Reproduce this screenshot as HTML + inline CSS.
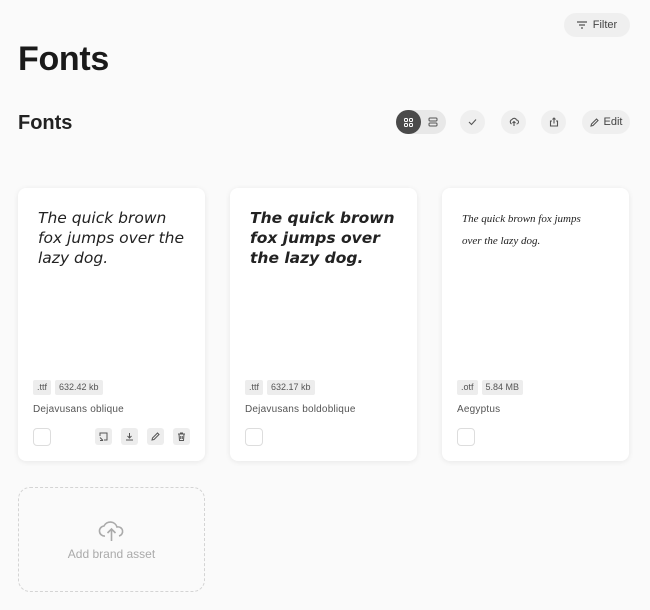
<!DOCTYPE html>
<html><head><meta charset="utf-8"><style>
*{box-sizing:border-box;margin:0;padding:0}
body{width:650px;height:610px;background:#fafafa;font-family:"Liberation Sans",sans-serif;position:relative;overflow:hidden;color:#222}
.abs{position:absolute}
.pill{position:absolute;background:#efefef;border-radius:12px;display:flex;align-items:center;justify-content:center;font-size:11px;color:#444}
h1{position:absolute;left:18px;top:40px;font-size:34px;font-weight:700;letter-spacing:-0.3px;color:#1a1a1a}
h2{position:absolute;left:18px;top:112px;font-size:20px;font-weight:700;color:#222}
.card{position:absolute;top:188px;width:187px;height:273px;background:#fff;border-radius:8px;box-shadow:0 1px 6px rgba(0,0,0,0.08)}
.sample{position:absolute;left:20px;top:20px;width:155px;font-size:15.5px;line-height:20px;color:#222}
.tags{position:absolute;left:15px;top:192px;display:flex;gap:4px}
.tag{background:#ededed;border-radius:2px;font-size:9px;color:#555;padding:2px 4px;height:15px;line-height:11px}
.name{position:absolute;left:15px;top:216px;font-size:10px;color:#555;letter-spacing:0.2px}
.chk{position:absolute;left:15px;top:240px;width:18px;height:18px;border:1px solid #ddd;border-radius:4px;background:#fff}
.ib{position:absolute;top:240px;width:17px;height:17px;background:#ededed;border-radius:3px;display:flex;align-items:center;justify-content:center}
</style></head><body>
<div class="pill" style="left:564px;top:13px;width:66px;height:24px"><svg width="10" height="8" viewBox="0 0 10 8" style="margin-right:6px"><path d="M0 1h10M2 4h6M4 7h2" stroke="#555" stroke-width="1.2"/></svg>Filter</div>
<h1>Fonts</h1>
<h2>Fonts</h2>
<div class="pill" style="left:396px;top:110px;width:50px;height:24px;background:#e8e8e8"></div>
<div class="abs" style="left:396px;top:110px;width:25px;height:24px;background:#4a4a4a;border-radius:12px;display:flex;align-items:center;justify-content:center"><svg width="9" height="9" viewBox="0 0 9 9" fill="none" stroke="#fff" stroke-width="1"><rect x=".5" y=".5" width="3" height="3" rx="1"/><rect x="5.5" y=".5" width="3" height="3" rx="1"/><rect x=".5" y="5.5" width="3" height="3" rx="1"/><rect x="5.5" y="5.5" width="3" height="3" rx="1"/></svg></div>
<svg class="abs" style="left:428px;top:117px" width="10" height="10" viewBox="0 0 10 10" fill="none" stroke="#555"><rect x="1" y="1" width="8" height="3" rx="1"/><rect x="1" y="6" width="8" height="3" rx="1"/></svg>
<div class="pill" style="left:460px;top:110px;width:25px;height:24px"><svg width="9" height="8" viewBox="0 0 9 8" fill="none" stroke="#555" stroke-width="1.1"><path d="M1 4l2.5 2.5L8 1.5"/></svg></div>
<div class="pill" style="left:501px;top:110px;width:25px;height:24px"><svg width="10" height="10" viewBox="0 0 10 10" fill="none" stroke="#555" stroke-width="1.1"><path d="M2.5 7A2.5 2.5 0 0 1 3 2.5a2.5 2.5 0 0 1 4.5.5 2 2 0 0 1 0 4M5 9V4.5M3.5 6L5 4.5 6.5 6"/></svg></div>
<div class="pill" style="left:541px;top:110px;width:25px;height:24px"><svg width="10" height="10" viewBox="0 0 10 10" fill="none" stroke="#555" stroke-width="1.1"><path d="M3 4H1.5v5h7V4H7M5 6.5V1M3.5 2.5L5 1l1.5 1.5"/></svg></div>
<div class="pill" style="left:582px;top:110px;width:48px;height:24px"><svg width="9" height="9" viewBox="0 0 9 9" fill="none" stroke="#555" stroke-width="1.1" style="margin-right:5px"><path d="M1 8l.5-2L6.5 1 8 2.5 3 7.5z"/></svg>Edit</div>

<div class="card" style="left:18px"><div class="sample" style="font-family:'DejaVu Sans',sans-serif;font-style:italic">The quick brown fox jumps over the lazy dog.</div>
<div class="tags"><span class="tag">.ttf</span><span class="tag">632.42 kb</span></div><div class="name">Dejavusans oblique</div><div class="chk"></div>
<div class="ib" style="left:77px"><svg width="9" height="9" viewBox="0 0 9 9" fill="none" stroke="#555"><path d="M1 4V1h7v7H5M1 5.5l3 3M1 8.5h3"/></svg></div>
<div class="ib" style="left:103px"><svg width="9" height="9" viewBox="0 0 9 9" fill="none" stroke="#555"><path d="M4.5 1v5M2.5 4l2 2 2-2M1 8h7"/></svg></div>
<div class="ib" style="left:129px"><svg width="9" height="9" viewBox="0 0 9 9" fill="none" stroke="#555"><path d="M1 8l.5-2L6.5 1 8 2.5 3 7.5z"/></svg></div>
<div class="ib" style="left:155px"><svg width="9" height="9" viewBox="0 0 9 9" fill="none" stroke="#555"><path d="M1 2h7M3.5 2V1h2v1M2 2l.5 6.5h4L7 2M3.7 4v3M5.3 4v3"/></svg></div>
</div>
<div class="card" style="left:230px"><div class="sample" style="font-family:'DejaVu Sans',sans-serif;font-style:italic;font-weight:bold;width:150px;font-size:15.5px">The quick brown fox jumps over the lazy dog.</div>
<div class="tags"><span class="tag">.ttf</span><span class="tag">632.17 kb</span></div><div class="name">Dejavusans boldoblique</div><div class="chk"></div></div>
<div class="card" style="left:442px"><div class="sample" style="font-family:'Liberation Serif',serif;font-style:italic;font-size:11px;line-height:22px;top:20px;width:135px">The quick brown fox jumps over the lazy dog.</div>
<div class="tags"><span class="tag">.otf</span><span class="tag">5.84 MB</span></div><div class="name">Aegyptus</div><div class="chk"></div></div>

<div class="abs" style="left:18px;top:487px;width:187px;height:105px;border:1.5px dashed #d4d4d4;border-radius:12px"></div>
<svg class="abs" style="left:98px;top:518px" width="27" height="24" viewBox="0 0 27 24" fill="none" stroke="#aaa" stroke-width="1.6"><path d="M7 18A5 5 0 0 1 6 8a7 7 0 0 1 13 1 4.5 4.5 0 0 1 2 9M13.5 23V11M9.5 15l4-4 4 4"/></svg>
<div class="abs" style="left:18px;top:547px;width:187px;text-align:center;font-size:12px;color:#aaa">Add brand asset</div>
</body></html>
